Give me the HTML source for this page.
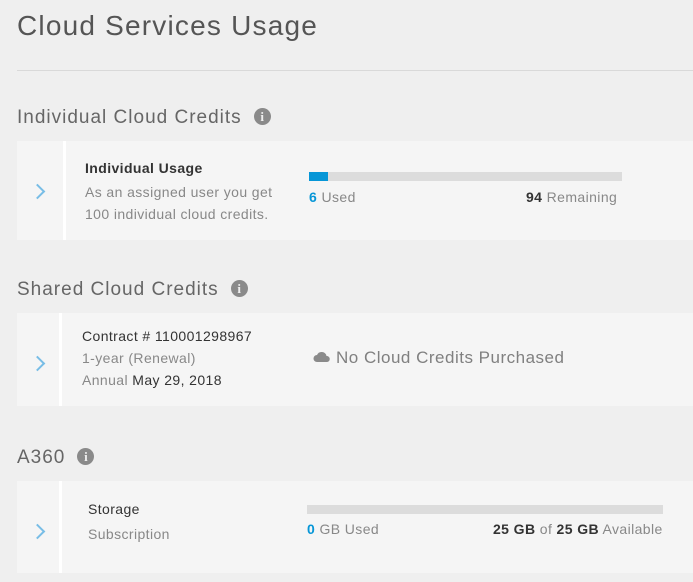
<!DOCTYPE html>
<html><head><style>
body{margin:0;width:693px;height:582px;background:#efefef;font-family:"Liberation Sans",sans-serif;position:relative;overflow:hidden;color:#3c3c3c}
.a{position:absolute;white-space:nowrap}
h1{position:absolute;left:17px;top:10px;margin:0;font-weight:normal;font-size:28px;color:#555;letter-spacing:1.2px}
.hr{position:absolute;left:17px;right:0;top:70px;height:1px;background:#d9d9d9}
.h2{position:absolute;left:17px;font-size:19px;color:#666;letter-spacing:1px}
.info{display:inline-block;width:17px;height:17px;border-radius:50%;background:#8a8a8a;color:#efefef;font-size:13px;font-weight:bold;text-align:center;line-height:17px;vertical-align:2px;margin-left:12px;font-family:"Liberation Serif",serif;letter-spacing:0}
.card{position:absolute;left:17px;right:0;background:#f5f5f5}
.div{position:absolute;top:0;bottom:0;width:3px;background:#fff}
.chev{position:absolute;left:15px;width:9px;height:9px;border-right:2px solid #78bde6;border-top:2px solid #78bde6;transform:rotate(45deg)}
.bar{position:absolute;height:9px;background:#dcdcdc}
.fill{height:100%;background:#0696d7}
.blue{color:#0696d7;font-weight:bold}
.b{font-weight:bold;color:#333}
.g{color:#888}
.t{font-size:14px;letter-spacing:0.4px}
</style></head><body>
<h1>Cloud Services Usage</h1>
<div class="hr"></div>

<div class="h2" style="top:107px">Individual Cloud Credits<span class="info">i</span></div>
<div class="card" style="top:141px;height:99px">
 <div class="div" style="left:46px"></div>
 <div class="chev" style="top:45px"></div>
 <div class="a t" style="left:68px;top:19px;font-weight:bold;color:#333">Individual Usage</div>
 <div class="a g t" style="left:68px;top:40px;line-height:22px">As an assigned user you get<br>100 individual cloud credits.</div>
 <div class="bar" style="left:292px;top:31px;width:313px"><div class="fill" style="width:19px"></div></div>
 <div class="a g t" style="left:292px;top:48px"><span class="blue">6</span> Used</div>
 <div class="a g t" style="left:509px;top:48px"><span class="b">94</span> Remaining</div>
</div>

<div class="h2" style="top:279px">Shared Cloud Credits<span class="info">i</span></div>
<div class="card" style="top:313px;height:93px">
 <div class="div" style="left:42px"></div>
 <div class="chev" style="top:45px"></div>
 <div class="a t" style="left:65px;top:15px;color:#333">Contract # 110001298967</div>
 <div class="a g t" style="left:65px;top:37px">1-year (Renewal)</div>
 <div class="a g t" style="left:65px;top:59px">Annual <span style="color:#333">May 29, 2018</span></div>
 <svg class="a" style="left:296px;top:38px" width="18" height="12" viewBox="0 0 18 12"><path d="M4 11a3.5 3.5 0 0 1 0-7 5 5 0 0 1 9.5 1 3 3 0 0 1 .5 6z" fill="#8a8a8a"/></svg>
 <div class="a" style="left:319px;top:35px;font-size:17px;color:#808080;letter-spacing:0.5px">No Cloud Credits Purchased</div>
</div>

<div class="h2" style="top:447px">A360<span class="info">i</span></div>
<div class="card" style="top:481px;height:92px">
 <div class="div" style="left:42px"></div>
 <div class="chev" style="top:45px"></div>
 <div class="a t" style="left:71px;top:20px;color:#333">Storage</div>
 <div class="a g t" style="left:71px;top:45px">Subscription</div>
 <div class="bar" style="left:290px;top:24px;width:356px"></div>
 <div class="a g t" style="left:290px;top:40px"><span class="blue">0</span> GB Used</div>
 <div class="a g t" style="left:476px;top:40px"><span class="b">25 GB</span> of <span class="b">25 GB</span> Available</div>
</div>
</body></html>
